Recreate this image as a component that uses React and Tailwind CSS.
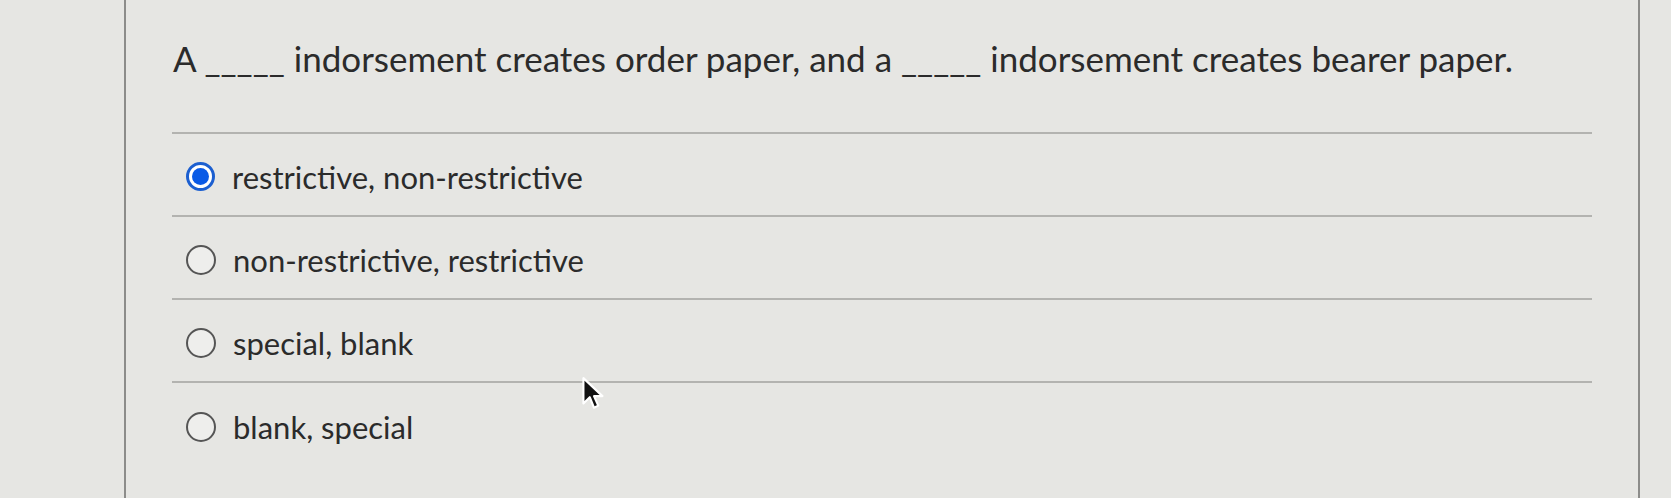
export default function App() {
  const options = [
    "restrictive, non-restrictive",
    "non-restrictive, restrictive",
    "special, blank",
    "blank, special",
  ];
  return (
    <div className="relative w-[1671px] h-[498px] overflow-hidden bg-[#e6e6e3] text-[#2b2b2b]" style={{ fontFamily: "Lato, 'Noto Sans', sans-serif" }}>
      <div className="flex h-full">
        <div className="w-[126px] shrink-0 border-r-2 border-[#8c8c8a]" />
        <div className="w-[1514px] shrink-0 border-r-2 border-[#8c8c8a] pl-[46px] pr-[46px]">
          <div className="pt-[35px] pb-[51px] pl-[1px] text-[35px] leading-[46px]">
            A _____ indorsement creates order paper, and a _____ indorsement creates bearer paper.
          </div>
          <div className="border-t-2 border-[#b3b3b0]">
            {options.map((o, i) => (
              <div key={i} className={"flex items-center h-[83px] pt-[4px] pl-[14px] " + (i < 3 ? "border-b-2 border-[#b3b3b0]" : "")}>
                {i === 0 ? (
                  <span className="w-[29px] h-[29px] rounded-full border-[3px] border-[#1c5fd0] bg-white flex items-center justify-center">
                    <span className="w-[17px] h-[17px] rounded-full bg-[#0a5ae6]" />
                  </span>
                ) : (
                  <span className="w-[30px] h-[30px] rounded-full border-2 border-[#555] bg-[#eeeeec]" />
                )}
                <span className="ml-[17px] text-[31px] leading-[40px]">{o}</span>
              </div>
            ))}
          </div>
        </div>
        <div className="flex-1" />
      </div>
      <svg className="absolute left-[581px] top-[376px]" width="26" height="36" viewBox="0 0 24 34">
        <path d="M2 2 L2 26 L8 20 L12 30 L16 28 L12 19 L20 19 Z" fill="#111" stroke="#fff" strokeWidth="2" strokeLinejoin="round" />
      </svg>
    </div>
  );
}
